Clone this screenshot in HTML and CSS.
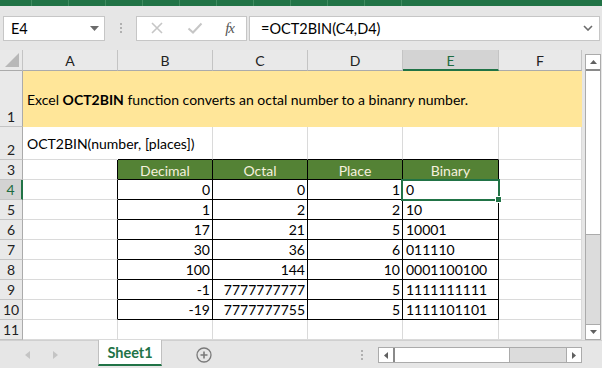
FILE: index.html
```html
<!DOCTYPE html>
<html>
<head>
<meta charset="utf-8">
<meta name="viewport" content="width=device-width, initial-scale=1">
<link rel="stylesheet" href="styles.css">
</head>
<body>

<div class="ribbon">
	<span></span><span></span><span></span><span></span><span></span><span></span>
	<span></span><span></span><span></span><span></span><span></span>
</div>

<div class="fbar">
	<div class="namebox">
		<span>E4</span>
		<svg class="caret" width="9" height="5" viewBox="0 0 9 5"><path d="M0 0H9L4.5 5Z" fill="#6b6b6b"/></svg>
	</div>
	<div class="grip"><i></i><i></i><i></i></div>
	<div class="fxbox">
		<svg width="14" height="14" viewBox="0 0 14 14"><path d="M2 2L12 12M12 2L2 12" stroke="#c6c6c6" stroke-width="1.6"/></svg>
		<svg width="16" height="14" viewBox="0 0 16 14"><path d="M1.5 7.5L6 11.5L14.5 2.5" stroke="#c6c6c6" stroke-width="2" fill="none"/></svg>
		<span class="fx">fx</span>
	</div>
	<div class="formula">
		<span>=OCT2BIN(C4,D4)</span>
		<svg class="chev" width="10" height="6" viewBox="0 0 10 6"><path d="M1 1L5 5L9 1" stroke="#6b6b6b" stroke-width="1.6" fill="none"/></svg>
	</div>
</div>

<div class="main">
	<div class="grid">
		<!-- column headers -->
		<div class="corner"><svg width="14" height="14" viewBox="0 0 14 14"><path d="M14 0V14H0Z" fill="#b8b8b8"/></svg></div>
		<div class="ch">A</div>
		<div class="ch">B</div>
		<div class="ch">C</div>
		<div class="ch">D</div>
		<div class="ch sel">E</div>
		<div class="ch">F</div>

		<!-- row 1 -->
		<div class="rh">1</div>
		<div class="c note spill"><span>Excel <b>OCT2BIN</b> function converts an octal number to a binanry number.</span></div>
		<div class="c note"></div>
		<div class="c note"></div>
		<div class="c note"></div>
		<div class="c note"></div>
		<div class="c note"></div>

		<!-- row 2 -->
		<div class="rh">2</div>
		<div class="c spill"><span>OCT2BIN(number, [places])</span></div>
		<div class="c tt"></div>
		<div class="c tt"></div>
		<div class="c tt"></div>
		<div class="c tt"></div>
		<div class="c"></div>

		<!-- row 3 -->
		<div class="rh">3</div>
		<div class="c tl"></div>
		<div class="c t th">Decimal</div>
		<div class="c t th">Octal</div>
		<div class="c t th">Place</div>
		<div class="c t th">Binary</div>
		<div class="c"></div>

		<div class="rh rsel">4</div>
		<div class="c tl"></div>
		<div class="c t r">0</div>
		<div class="c t r">0</div>
		<div class="c t r">1</div>
		<div class="c t active">0</div>
		<div class="c"></div>

		<div class="rh">5</div>
		<div class="c tl"></div>
		<div class="c t r">1</div>
		<div class="c t r">2</div>
		<div class="c t r">2</div>
		<div class="c t">10</div>
		<div class="c"></div>

		<div class="rh">6</div>
		<div class="c tl"></div>
		<div class="c t r">17</div>
		<div class="c t r">21</div>
		<div class="c t r">5</div>
		<div class="c t">10001</div>
		<div class="c"></div>

		<div class="rh">7</div>
		<div class="c tl"></div>
		<div class="c t r">30</div>
		<div class="c t r">36</div>
		<div class="c t r">6</div>
		<div class="c t">011110</div>
		<div class="c"></div>

		<div class="rh">8</div>
		<div class="c tl"></div>
		<div class="c t r">100</div>
		<div class="c t r">144</div>
		<div class="c t r">10</div>
		<div class="c t">0001100100</div>
		<div class="c"></div>

		<div class="rh">9</div>
		<div class="c tl"></div>
		<div class="c t r">-1</div>
		<div class="c t r">7777777777</div>
		<div class="c t r">5</div>
		<div class="c t">1111111111</div>
		<div class="c"></div>

		<div class="rh">10</div>
		<div class="c tl"></div>
		<div class="c t r">-19</div>
		<div class="c t r">7777777755</div>
		<div class="c t r">5</div>
		<div class="c t">1111101101</div>
		<div class="c"></div>

		<div class="rh">11</div>
		<div class="c"></div>
		<div class="c"></div>
		<div class="c"></div>
		<div class="c"></div>
		<div class="c"></div>
		<div class="c"></div>
	</div>

	<div class="vscroll">
		<div class="sbtn"><svg width="7" height="4" viewBox="0 0 7 4"><path d="M0 4H7L3.5 0Z" fill="#606060"/></svg></div>
		<div class="vthumb"></div>
		<div class="track"></div>
		<div class="sbtn"><svg width="7" height="4" viewBox="0 0 7 4"><path d="M0 0H7L3.5 4Z" fill="#606060"/></svg></div>
	</div>
</div>

<div class="tabs">
	<div class="nav">
		<svg width="5" height="8" viewBox="0 0 5 8"><path d="M5 0V8L0 4Z" fill="#c4c4c4"/></svg>
		<svg width="5" height="8" viewBox="0 0 5 8"><path d="M0 0V8L5 4Z" fill="#c4c4c4"/></svg>
	</div>
	<div class="tab">Sheet1</div>
	<div class="add">
		<svg width="16" height="16" viewBox="0 0 16 16"><circle cx="8" cy="8" r="7" stroke="#7a7a7a" stroke-width="1.3" fill="none"/><path d="M8 4.5V11.5M4.5 8H11.5" stroke="#7a7a7a" stroke-width="1.6"/></svg>
	</div>
	<div class="grip tgrip"><i></i><i></i><i></i></div>
	<div class="hscroll">
		<div class="sbtn"><svg width="4" height="7" viewBox="0 0 4 7"><path d="M4 0V7L0 3.5Z" fill="#606060"/></svg></div>
		<div class="hthumb"></div>
		<div class="track"></div>
		<div class="sbtn"><svg width="4" height="7" viewBox="0 0 4 7"><path d="M0 0V7L4 3.5Z" fill="#606060"/></svg></div>
	</div>
</div>

</body>
</html>
```

FILE: styles.css
```css
body {
	margin: 0;
	width: 602px;
	height: 368px;
	overflow: hidden;
	background: #e6e6e6;
	font-family: "Lato", "Open Sans", sans-serif;
	font-size: 14px;
	color: #000;
}

/* ribbon edge */
.ribbon {
	height: 6px;
	background: #217346;
	display: flex;
	gap: 36px;
	padding-left: 31px;
}

.ribbon span {
	width: 1px;
	height: 6px;
	background: #3f8a5f;
}

/* formula bar */
.fbar {
	height: 44px;
	display: flex;
	align-items: center;
	padding: 0 2px 0 3px;
	box-sizing: border-box;
	font-size: 14.5px;
}

.namebox,
.fxbox,
.formula {
	height: 25px;
	background: #fff;
	border: 1px solid #c6c6c6;
	box-sizing: border-box;
	display: flex;
	align-items: center;
}

.namebox {
	width: 102px;
	padding: 0 5px 0 7px;
	justify-content: space-between;
}

.grip {
	width: 31px;
	display: flex;
	flex-direction: column;
	align-items: center;
	gap: 2px;
}

.grip i {
	width: 2px;
	height: 2px;
	background: #b0b0b0;
}

.fxbox {
	width: 111px;
	padding: 0 12px 0 13px;
	justify-content: space-between;
}

.fx {
	font-family: "Liberation Serif", serif;
	font-style: italic;
	font-size: 15px;
	color: #555;
	letter-spacing: -1px;
}

.formula {
	flex: 1;
	margin-left: 2px;
	padding: 0 6px 0 11px;
	justify-content: space-between;
}

/* sheet */
.main {
	display: flex;
	height: 290px;
}

.grid {
	display: grid;
	grid-template-columns: 23px 95px 95px 95px 95px 96px 83px;
	grid-template-rows: 21px 56px 33px repeat(9, 20px);
	background: #fff;
}

.grid > div {
	box-sizing: border-box;
	border-right: 1px solid #dadada;
	border-bottom: 1px solid #dadada;
	display: flex;
	align-items: center;
	white-space: nowrap;
	min-width: 0;
}

.grid > .corner {
	background: #e9e9e9;
	border-right-color: #c4c4c4;
	border-bottom-color: #ababab;
	justify-content: flex-end;
	align-items: flex-end;
	padding: 0 3px 3px 0;
}

.grid > .ch {
	background: #e9e9e9;
	border-right-color: #c4c4c4;
	border-bottom-color: #ababab;
	justify-content: center;
	color: #222;
	padding-top: 1px;
}

.grid > .ch.sel {
	background: #d3d3d3;
	color: #1d6b40;
	border-bottom: 2px solid #217346;
}

.grid > .rh {
	background: #e9e9e9;
	border-right-color: #ababab;
	border-bottom-color: #c4c4c4;
	justify-content: center;
	align-items: flex-end;
	color: #222;
	padding-bottom: 1px;
}

.grid > .rh.rsel {
	background: #d3d3d3;
	color: #1d6b40;
	border-right: 2px solid #217346;
}

.grid > .c {
	padding: 0 2px 0 3px;
}

.grid > .note {
	background: #ffe699;
	border-color: #ffe699;
}

.grid > .spill {
	padding-left: 4px;
	border-right-color: transparent;
	overflow: visible;
	position: relative;
	z-index: 1;
}

.grid > .note.spill {
	border-right-color: #ffe699;
	padding-top: 1px;
}

.grid > .tt {
	border-bottom-color: #000;
}

.grid > .tl {
	border-right-color: #000;
}

.grid > .t {
	border-right-color: #000;
	border-bottom-color: #000;
}

.grid > .th {
	background: #548235;
	color: #f6f1de;
	justify-content: center;
	padding: 1px 0 0;
}

.grid > .r {
	justify-content: flex-end;
	padding-right: 2px;
}

.grid > .active {
	position: relative;
}

.active:after {
	content: '';
	position: absolute;
	left: -2px;
	top: -1px;
	right: -2px;
	bottom: -2px;
	border: 2px solid #217346;
}

.active:before {
	content: '';
	position: absolute;
	right: -4px;
	bottom: -4px;
	width: 5px;
	height: 5px;
	background: #217346;
	border: 1px solid #fff;
	z-index: 1;
}

/* scroll bars */
.vscroll {
	width: 14px;
	margin: 4px 0 0 3px;
	display: flex;
	flex-direction: column;
	border: 1px solid #ababab;
	border-bottom: none;
	background: #dcdcdc;
}

.sbtn {
	background: #fff;
	display: flex;
	align-items: center;
	justify-content: center;
	box-sizing: border-box;
}

.vscroll .sbtn {
	height: 14px;
}

.vscroll .sbtn:last-child {
	border-top: 1px solid #ababab;
	border-bottom: 1px solid #ababab;
	height: 16px;
}

.vthumb {
	height: 166px;
	background: #fff;
	border-top: 2px solid #8a8a8a;
	border-bottom: 1px solid #ababab;
	box-sizing: border-box;
}

.track {
	flex: 1;
}

.tabs {
	height: 28px;
	display: flex;
	border-top: 1px solid #d0d0d0;
	box-sizing: border-box;
	font-size: 14.5px;
}

.nav {
	width: 98px;
	display: flex;
	gap: 23px;
	align-items: center;
	padding-left: 25px;
	box-sizing: border-box;
}

.tab {
	width: 64px;
	height: 26px;
	margin-top: -1px;
	background: #fff;
	border-left: 1px solid #c0c0c0;
	border-right: 1px solid #c0c0c0;
	border-bottom: 2px solid #217346;
	box-sizing: border-box;
	display: flex;
	align-items: center;
	justify-content: center;
	color: #217346;
	font-weight: bold;
}

.add {
	width: 84px;
	display: flex;
	align-items: center;
	padding-left: 34px;
	box-sizing: border-box;
}

.tgrip {
	width: 32px;
	justify-content: center;
	margin-left: 100px;
}

.hscroll {
	width: 204px;
	height: 16px;
	margin-top: 6px;
	display: flex;
	border: 1px solid #ababab;
	box-sizing: border-box;
	background: #dcdcdc;
}

.hscroll .sbtn {
	width: 14px;
}

.hscroll .sbtn:last-child {
	border-left: 1px solid #ababab;
	width: 15px;
}

.hthumb {
	width: 117px;
	background: #fff;
	border-left: 2px solid #8a8a8a;
	border-right: 1px solid #ababab;
	box-sizing: border-box;
}
```
